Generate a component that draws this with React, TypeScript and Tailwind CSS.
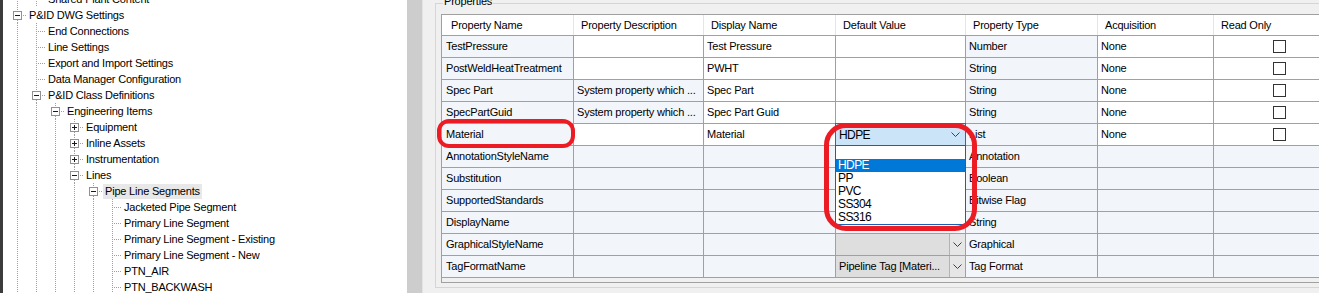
import React from "react";

type TreeNode = { l: number; t: string; b?: "minus" | "plus"; sel?: boolean };

const tree: TreeNode[] = [
  { l: 1, t: "Shared Plant Content" },
  { l: 0, t: "P&ID DWG Settings", b: "minus" },
  { l: 1, t: "End Connections" },
  { l: 1, t: "Line Settings" },
  { l: 1, t: "Export and Import Settings" },
  { l: 1, t: "Data Manager Configuration" },
  { l: 1, t: "P&ID Class Definitions", b: "minus" },
  { l: 2, t: "Engineering Items", b: "minus" },
  { l: 3, t: "Equipment", b: "plus" },
  { l: 3, t: "Inline Assets", b: "plus" },
  { l: 3, t: "Instrumentation", b: "plus" },
  { l: 3, t: "Lines", b: "minus" },
  { l: 4, t: "Pipe Line Segments", b: "minus", sel: true },
  { l: 5, t: "Jacketed Pipe Segment" },
  { l: 5, t: "Primary Line Segment" },
  { l: 5, t: "Primary Line Segment - Existing" },
  { l: 5, t: "Primary Line Segment - New" },
  { l: 5, t: "PTN_AIR" },
  { l: 5, t: "PTN_BACKWASH" },
];

const DOT = "#a0a0a0";

function Guide() {
  return (
    <svg width="19" height="16" className="shrink-0">
      <line x1="9.5" y1="0" x2="9.5" y2="16" stroke={DOT} strokeDasharray="1 1" />
    </svg>
  );
}

function Connector({ box }: { box?: "minus" | "plus" }) {
  if (!box) {
    return (
      <svg width="19" height="16" className="shrink-0">
        <line x1="9.5" y1="0" x2="9.5" y2="16" stroke={DOT} strokeDasharray="1 1" />
        <line x1="11" y1="8.5" x2="19" y2="8.5" stroke={DOT} strokeDasharray="1 1" />
      </svg>
    );
  }
  return (
    <svg width="19" height="16" className="shrink-0">
      <line x1="9.5" y1="0" x2="9.5" y2="4" stroke={DOT} strokeDasharray="1 1" />
      <line x1="9.5" y1="13" x2="9.5" y2="16" stroke={DOT} strokeDasharray="1 1" />
      <line x1="15" y1="8.5" x2="19" y2="8.5" stroke={DOT} strokeDasharray="1 1" />
      <rect x="5.5" y="4.5" width="8" height="8" fill="#fff" stroke="#919191" />
      <line x1="7" y1="8.5" x2="12" y2="8.5" stroke="#1a1a1a" />
      {box === "plus" && <line x1="9.5" y1="6" x2="9.5" y2="11" stroke="#1a1a1a" />}
    </svg>
  );
}

function TreeRow({ node }: { node: TreeNode }) {
  return (
    <div className="flex h-[16px] items-center pl-[5px]">
      {Array.from({ length: node.l }).map((_, i) => (
        <Guide key={i} />
      ))}
      <Connector box={node.b} />
      <span
        className={`whitespace-nowrap px-[2px] leading-[15px] ${
          node.sel ? "bg-[#e8e8e8]" : ""
        }`}
      >
        {node.t}
      </span>
    </div>
  );
}

function Chevron() {
  return (
    <svg width="9" height="5" viewBox="0 0 9 5" className="shrink-0">
      <path d="M0.5 0.5 L4.5 4.5 L8.5 0.5" fill="none" stroke="#404040" />
    </svg>
  );
}

const widths = [
  "w-[132px]",
  "w-[130px]",
  "w-[132px]",
  "w-[130px]",
  "w-[132px]",
  "w-[116px]",
  "w-[131px]",
];

const headers = [
  "Property Name",
  "Property Description",
  "Display Name",
  "Default Value",
  "Property Type",
  "Acquisition",
  "Read Only",
];

type Row = {
  name: string;
  desc?: string;
  display?: string;
  def?: "material" | "graphical" | "tag";
  type: string;
  acq?: string;
  locked?: boolean;
};

const rows: Row[] = [
  { name: "TestPressure", display: "Test Pressure", type: "Number", acq: "None" },
  { name: "PostWeldHeatTreatment", display: "PWHT", type: "String", acq: "None" },
  { name: "Spec Part", desc: "System property which ...", display: "Spec Part", type: "String", acq: "None" },
  { name: "SpecPartGuid", desc: "System property which ...", display: "Spec Part Guid", type: "String", acq: "None" },
  { name: "Material", display: "Material", def: "material", type: "List", acq: "None" },
  { name: "AnnotationStyleName", type: "Annotation", locked: true },
  { name: "Substitution", type: "Boolean", locked: true },
  { name: "SupportedStandards", type: "Bitwise Flag", locked: true },
  { name: "DisplayName", type: "String", locked: true },
  { name: "GraphicalStyleName", def: "graphical", type: "Graphical", locked: true },
  { name: "TagFormatName", def: "tag", type: "Tag Format", locked: true },
];

const TINT = "bg-[#f2f5fa]";

function Cell({
  i,
  tint,
  children,
  extra = "",
}: {
  i: number;
  tint: boolean;
  children?: React.ReactNode;
  extra?: string;
}) {
  return (
    <div
      className={`${widths[i]} relative flex shrink-0 items-center overflow-visible whitespace-nowrap border-r border-[#a0a0a0] ${
        i === 0 ? "pl-[4px]" : "pl-[3px]"
      } ${tint ? TINT : "bg-white"} ${extra}`}
    >
      {children}
    </div>
  );
}

function MaterialCombo() {
  return (
    <>
      <div className="absolute -left-[1px] -top-[1px] flex h-[23px] w-[131px] items-center justify-between border border-[#0078d7] bg-[#cce4f7] pl-[3px] pr-[5px] text-[12px] tracking-[-0.6px]">
        <span>HDPE</span>
        <Chevron />
      </div>
      <div className="absolute -left-[1px] top-[21px] z-10 flex h-[80px] w-[131px] flex-col border border-[#1a5fb0] bg-white pt-[13px] text-[12px] leading-[13px] tracking-[-0.6px]">
        <div className="bg-[#0078d7] pl-[2px] text-white">HDPE</div>
        <div className="pl-[2px]">PP</div>
        <div className="pl-[2px]">PVC</div>
        <div className="pl-[2px]">SS304</div>
        <div className="pl-[2px]">SS316</div>
      </div>
    </>
  );
}

function GrayCombo({ text }: { text?: string }) {
  return (
    <div className="absolute inset-0 flex">
      <div className="flex flex-1 items-center bg-[#dedede] pl-[3px]">{text}</div>
      <div className="flex w-[16px] items-center justify-center border-l border-[#b4b4b4] bg-[#e6e6e6]">
        <Chevron />
      </div>
    </div>
  );
}

function Checkbox() {
  return <div className="h-[13px] w-[13px] border border-[#333333] bg-white" />;
}

function DataRow({ row, last }: { row: Row; last: boolean }) {
  const L = !!row.locked;
  return (
    <div className={`flex h-[22px] border-t border-[#a0a0a0] ${last ? "h-[23px] border-b" : ""}`}>
      <Cell i={0} tint>
        {row.name}
      </Cell>
      <Cell i={1} tint={L || !!row.desc}>
        {row.desc}
      </Cell>
      <Cell i={2} tint={L}>
        {row.display}
      </Cell>
      <Cell i={3} tint={L} extra={row.def === "material" ? "z-10" : ""}>
        {row.def === "material" && <MaterialCombo />}
        {row.def === "graphical" && <GrayCombo />}
        {row.def === "tag" && <GrayCombo text="Pipeline Tag [Materi..." />}
      </Cell>
      <Cell i={4} tint>
        {row.type}
      </Cell>
      <Cell i={5} tint={L}>
        {row.acq}
      </Cell>
      <Cell i={6} tint={L} extra="justify-center !pl-0">
        {!L && <Checkbox />}
      </Cell>
    </div>
  );
}

export default function App() {
  return (
    <div className="relative flex h-[293px] w-[1319px] overflow-hidden bg-[#f0f0f0] font-['Liberation_Sans',Arial,sans-serif] text-[11px] tracking-[-0.2px] text-black">
      <div className="w-[3px] shrink-0 bg-[#3c3c3c]" />
      <div className="w-[404px] shrink-0 overflow-hidden bg-white">
        <div className="-mt-[9px]">
          {tree.map((n, i) => (
            <TreeRow key={i} node={n} />
          ))}
        </div>
      </div>
      <div className="w-[15px] shrink-0 bg-[#cdcdcd]" />
      <div className="w-[1px] shrink-0 bg-[#e3e3e3]" />
      <div className="shrink-0 pl-[12px]">
        <div className="relative mt-[3px] h-[285px] w-[1000px] border-b border-l border-t border-[#d5d5d5] pl-[5px] pt-[10px]">
          <span className="absolute -top-[10px] left-[7px] bg-[#f0f0f0] px-[1px] leading-[14px]">
            Properties
          </span>
          <div className="h-[269px] w-[906px] border border-[#a0a0a0] bg-[#f0f0f0]">
            <div className="flex h-[20px] bg-white">
              {headers.map((h, i) => (
                <div
                  key={h}
                  className={`${widths[i]} flex shrink-0 items-center whitespace-nowrap border-r border-[#e5e5e5] ${
                    i === 0 ? "pl-[9px]" : "pl-[7px]"
                  }`}
                >
                  {h}
                </div>
              ))}
            </div>
            {rows.map((r, i) => (
              <DataRow key={r.name} row={r} last={i === rows.length - 1} />
            ))}
          </div>
        </div>
      </div>

      {/* red call-out marks */}
      <div className="pointer-events-none absolute left-[437px] top-[119px] z-20 h-[29px] w-[138px] rounded-[12px] border-[4px] border-[#ec1c24]" />
      <div className="pointer-events-none absolute left-[824px] top-[123px] z-20 h-[108px] w-[153px] rounded-[22px] border-[5px] border-[#ec1c24]" />
    </div>
  );
}
